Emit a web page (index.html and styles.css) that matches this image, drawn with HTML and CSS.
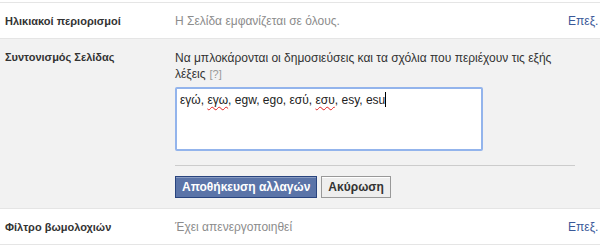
FILE: index.html
```html
<!DOCTYPE html>
<html lang="el">
  <head>
    <meta charset="UTF-8" />
    <title>Ρυθμίσεις Σελίδας</title>
    <link rel="stylesheet" href="styles.css">
  </head>
  <body>
  <div class="settings">

    <div class="row">
      <div class="label">Ηλικιακοί περιορισμοί</div>
      <div class="value">Η Σελίδα εμφανίζεται σε όλους.</div>
      <a class="edit" href="#">Επεξ.</a>
    </div>

    <div class="row open">
      <div class="label">Συντονισμός Σελίδας</div>
      <div class="body">
        <div class="desc">Να μπλοκάρονται οι δημοσιεύσεις και τα σχόλια που περιέχουν τις εξής</div>
        <div class="desc">λέξεις<span class="help">[?]</span></div>
        <div class="words">εγώ, <span class="typo">εγω</span>, egw, ego, εσύ, <span class="typo">εσυ</span>, esy, esu<span class="caret"></span></div>
        <div class="actions">
          <button class="btn save">Αποθήκευση αλλαγών</button>
          <button class="btn cancel">Ακύρωση</button>
        </div>
      </div>
    </div>

    <div class="row">
      <div class="label">Φίλτρο βωμολοχιών</div>
      <div class="value">Έχει απενεργοποιηθεί</div>
      <a class="edit" href="#">Επεξ.</a>
    </div>

  </div>
  </body>
</html>
```

FILE: styles.css
```css
body
{
    margin: 0;
    background: #fff;
    font-family: "Liberation Sans", Arial, sans-serif;
    font-size: 12px;
    color: #333;
}

.settings
{
    padding-top: 2px;
    width: 600px;
}

.row
{
    display: flex;
    align-items: center;
    height: 35px;
    border-top: 1px solid #e5e5e5;
}

.row:last-child
{
    border-bottom: 1px solid #e5e5e5;
}

.label
{
    width: 170px;
    padding-left: 5px;
    font-size: 11px;
    font-weight: bold;
    color: #333;
}

.value
{
    flex: 1;
    color: #8c8c8c;
}

.edit
{
    width: 32px;
    color: #3b5998;
    text-decoration: none;
}

.row.open
{
    height: auto;
    align-items: flex-start;
    background: #f2f2f2;
    padding: 11px 0 10px 0;
}

.row.open .label
{
    padding-top: 1px;
}

.body
{
    width: 400px;
}

.desc
{
    line-height: 16px;
    color: #333;
}

.help
{
    margin-left: 4px;
    font-size: 11px;
    color: #999;
}

.words
{
    box-sizing: border-box;
    width: 308px;
    height: 64px;
    margin-top: 5px;
    padding: 3px 3px;
    background: #fff;
    border: 2px solid #93b4ec;
    border-radius: 2px;
    color: #222;
    line-height: 16px;
}

.typo
{
    text-decoration: underline wavy #e02020;
    text-decoration-thickness: 1px;
    text-underline-offset: 2px;
}

.caret
{
    display: inline-block;
    width: 1px;
    height: 15px;
    background: #000;
    vertical-align: -3px;
}

.actions
{
    display: flex;
    gap: 4px;
    margin-top: 14px;
    padding-top: 10px;
    border-top: 1px solid #cccccc;
}

.btn
{
    height: 22px;
    padding: 0 6px;
    font-family: "Liberation Sans", Arial, sans-serif;
    font-size: 12px;
    font-weight: bold;
    cursor: pointer;
}

.save
{
    background: #5b74a8;
    border: 1px solid #29447e;
    color: #fff;
    box-shadow: inset 0 1px 0 #8a9cc2;
}

.cancel
{
    background: #eeeeee;
    border: 1px solid #999;
    color: #333;
    box-shadow: inset 0 1px 0 #fff;
}
```
